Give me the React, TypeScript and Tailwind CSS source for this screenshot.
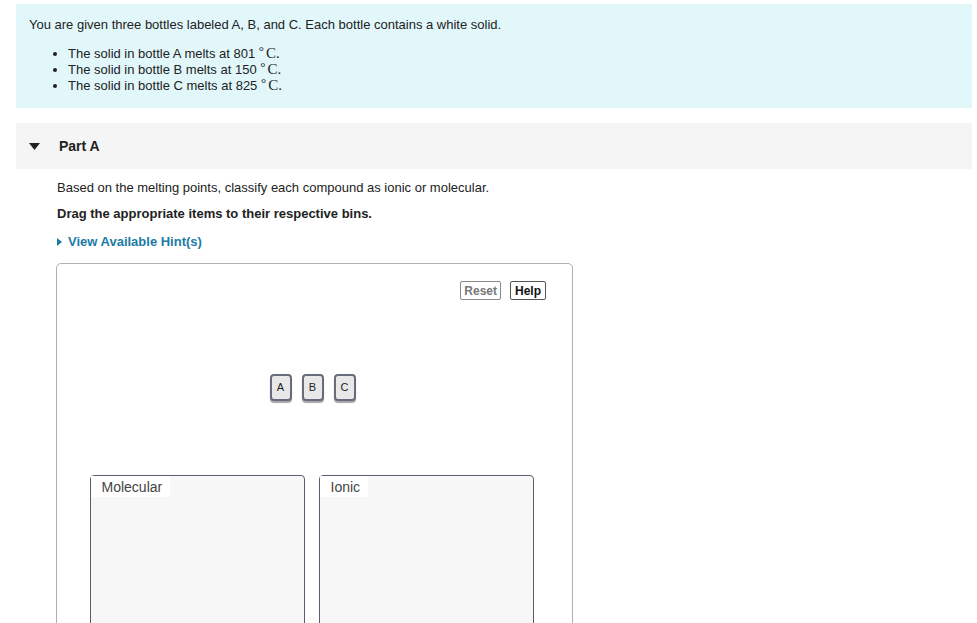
const font = { fontFamily: '"Liberation Sans", Arial, sans-serif' };

function Chip({ label }: { label: string }) {
  return (
    <div className="w-[22px] h-[27px] flex items-center justify-center rounded-[4px] border-2 border-[#686b7a] bg-[#e8e8e8] text-[11px] text-[#222] shadow-[0_2px_1px_rgba(0,0,0,0.35)]">
      {label}
    </div>
  );
}

function Bin({ title }: { title: string }) {
  return (
    <div className="w-[215px] h-[200px] rounded-t-[4px] border-[1.5px] border-[#5c5c6e] bg-[#f7f7f7]">
      <div className="inline-block bg-white pl-[11px] pr-[8px] h-[21px] leading-[23px] text-[14px] text-[#444]">{title}</div>
    </div>
  );
}

export default function App() {
  const melts = [
    { b: "A", t: "801" },
    { b: "B", t: "150" },
    { b: "C", t: "825" },
  ];

  return (
    <div className="bg-white min-h-[623px] pt-[4px] pl-[16px] pr-[5px] text-[#222] text-[13px]" style={font}>
      {/* intro */}
      <div className="bg-[#e1f7fa] pl-[13px] pt-[13px] pb-[15px]">
        <p className="leading-[16px]">You are given three bottles labeled A, B, and C. Each bottle contains a white solid.</p>
        <ul className="mt-[12px] pl-[39px] list-disc leading-[16px]">
          {melts.map((m) => (
            <li key={m.b} className="h-[16px]">
              The solid in bottle {m.b} melts at {m.t}{" "}
              <span className="text-[15px] leading-[16px]" style={{ fontFamily: '"Liberation Serif", serif' }}>
                <span className="relative top-[-3px] text-[13px] leading-none mr-[2px]">°</span>C.
              </span>
            </li>
          ))}
        </ul>
      </div>

      {/* part header */}
      <div className="mt-[15px] h-[46px] bg-[#f5f5f5] flex items-center">
        <svg width="11" height="7" viewBox="0 0 11 7" className="ml-[13px]">
          <polygon points="0,0 11,0 5.5,7" fill="#222" />
        </svg>
        <span className="ml-[19px] text-[14px] font-bold">Part A</span>
      </div>

      {/* content */}
      <div className="pl-[41px]">
        <p className="mt-[11px] leading-[16px]">Based on the melting points, classify each compound as ionic or molecular.</p>
        <p className="mt-[10px] leading-[16px] font-bold">Drag the appropriate items to their respective bins.</p>
        <div className="mt-[12px] flex items-center text-[#1b7ba5] font-bold leading-[16px]">
          <svg width="5" height="8" viewBox="0 0 5 8" className="mr-[6px]">
            <polygon points="0,0 5,4 0,8" fill="#1b7ba5" />
          </svg>
          View Available Hint(s)
        </div>

        <div className="mt-[13px] ml-[-1px] w-[517px] h-[400px] border border-[#b0b0b0] rounded-[5px] pt-[17px] pr-[26px]">
          <div className="flex justify-end gap-[9px]">
            <button className="h-[19px] px-[3px] border border-[#8a8a8a] rounded-[2px] text-[12px] font-bold text-[#777] leading-none">Reset</button>
            <button className="h-[19px] px-[4px] border border-[#555] rounded-[2px] text-[12px] font-bold text-[#111] leading-none">Help</button>
          </div>
          <div className="flex justify-center gap-[10px] mt-[74px] pl-[22px]">
            <Chip label="A" />
            <Chip label="B" />
            <Chip label="C" />
          </div>
          <div className="flex justify-center gap-[14px] mt-[74px] pl-[20px]">
            <Bin title="Molecular" />
            <Bin title="Ionic" />
          </div>
        </div>
      </div>
    </div>
  );
}
